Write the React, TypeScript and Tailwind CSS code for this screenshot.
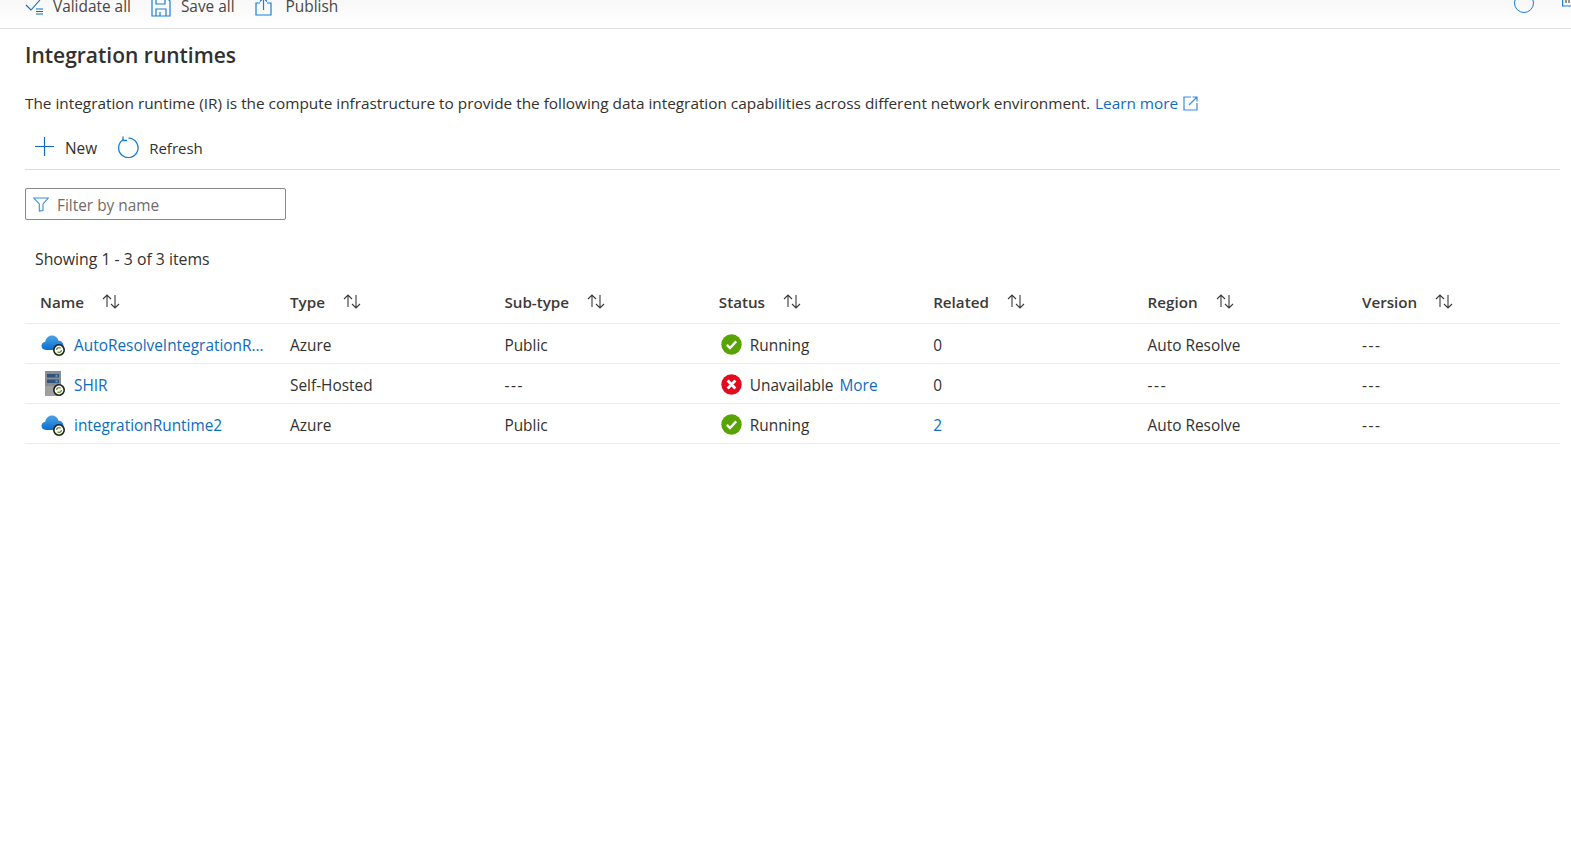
const rows = [
  { icon: "cloud", name: "AutoResolveIntegrationR...", type: "Azure", sub: "Public", ok: true, related: "0", region: "Auto Resolve" },
  { icon: "server", name: "SHIR", type: "Self-Hosted", sub: "---", ok: false, related: "0", region: "---" },
  { icon: "cloud", name: "integrationRuntime2", type: "Azure", sub: "Public", ok: true, related: "2", region: "Auto Resolve" },
];

const columns = ["Name", "Type", "Sub-type", "Status", "Related", "Region", "Version"];

function SortIcon() {
  return (
    <svg width="20" height="16" viewBox="0 0 20 16" fill="none" stroke="#3b3a39" strokeWidth="1.1">
      <path d="M6 14V2M2 6l4-4 4 4" />
      <path d="M14 2v13M10 11l4 4 4-4" />
    </svg>
  );
}

function Dashes({ value }: { value: string }) {
  return value === "---" ? <span className="tracking-[1.6px]">---</span> : <>{value}</>;
}

function Badge() {
  return (
    <svg className="absolute left-[12px] top-[11px]" width="12" height="12" viewBox="0 0 12 12">
      <circle cx="6" cy="6" r="5.2" fill="#fff" stroke="#1c1c1c" strokeWidth="1.6" />
      <path d="M3.6 6a2.4 2.4 0 0 1 4-1.8M8.4 6a2.4 2.4 0 0 1-4 1.8" fill="none" stroke="#5c9a1b" strokeWidth="1.3" />
    </svg>
  );
}

function RuntimeIcon({ kind }: { kind: string }) {
  return (
    <span className="relative mr-[8px] mt-[-2px] inline-block h-[24px] w-[25px] shrink-0">
      {kind === "cloud" ? (
        <svg className="absolute left-0 top-0" width="23" height="18" viewBox="0 0 23 18">
          <defs>
            <linearGradient id="cloudFill" x1="0" y1="0" x2="0" y2="1">
              <stop offset="0" stopColor="#4ba3e3" />
              <stop offset="1" stopColor="#0a6fd0" />
            </linearGradient>
          </defs>
          <path d="M5 17C2 17 .5 15 .5 12.8 .5 10.5 2.2 9 4.3 8.8 4.8 5 7.6 2.5 11 2.5c3.3 0 5.700 2 6.400 5 2.800.2 5 2.300 5 4.900 0 2.600-2 4.600-4.800 4.600z" fill="url(#cloudFill)" />
        </svg>
      ) : (
        <svg className="absolute left-[4px] top-[-2px]" width="16" height="25" viewBox="0 0 16 25">
          <rect width="16" height="25" fill="#a19f9d" />
          <rect width="16" height="15" fill="#8a8d91" />
          <rect x="2" y="3" width="12" height="3.500" fill="#32527c" />
          <rect x="2" y="8.500" width="12" height="3.500" fill="#32527c" />
          <rect x="10.500" y="3.800" width="2" height="2" fill="#4ba3e3" />
          <rect x="10.500" y="9.300" width="2" height="2" fill="#4ba3e3" />
        </svg>
      )}
      <Badge />
    </span>
  );
}

function StatusIcon({ ok }: { ok: boolean }) {
  return (
    <svg className="mr-[8px] mt-[-2px] shrink-0" width="21" height="21" viewBox="0 0 21 21">
      <circle cx="10.500" cy="10.500" r="10.200" fill={ok ? "#57a300" : "#e00b1c"} />
      {ok ? (
        <path d="M5.800 10.800l3.200 3.200 6.200-6.600" fill="none" stroke="#fff" strokeWidth="2.400" />
      ) : (
        <path d="M6.600 6.600l7.800 7.800M14.400 6.600l-7.800 7.800" fill="none" stroke="#fff" strokeWidth="2.800" />
      )}
    </svg>
  );
}

export default function App() {
  return (
    <div className="min-h-[844px] overflow-hidden bg-white font-['Open_Sans','Noto_Sans',sans-serif] text-[15.4px] text-[#323130]">
      {/* toolbar, cut off by the top of the window */}
      <div className="flex h-[29px] items-end justify-between overflow-hidden border-b border-[#e1e1e1] bg-gradient-to-b from-[#f8f8f8] to-white pb-[11px] pl-[25px]">
        <div className="flex h-[20px] items-center text-[#484644]">
          <svg className="mr-[9px]" width="19" height="18" viewBox="0 0 19 18" fill="none" stroke="#0f6cbd" strokeWidth="1.1">
            <path d="M1 7l5 5L15 2" />
            <path d="M11 11h7M11 13.500h7M11 16h7" />
          </svg>
          <span>Validate all</span>
          <svg className="ml-[20px] mr-[10px]" width="20" height="20" viewBox="0 0 20 20" fill="none" stroke="#1a7fd6" strokeWidth="1.2">
            <path d="M1 1h15l3 3v15H1z" />
            <path d="M5 1v6h9V1M5 19v-7h10v7M9 15v4" />
          </svg>
          <span>Save all</span>
          <svg className="ml-[20px] mr-[14px]" width="17" height="20" viewBox="0 0 17 20" fill="none" stroke="#1a7fd6" strokeWidth="1.2">
            <path d="M5 6H1v12h15V6h-4" />
            <path d="M8.500 13V1M5 4.500L8.500 1 12 4.500" />
          </svg>
          <span>Publish</span>
        </div>
        <div className="flex h-[20px] items-center">
          <span className="mr-[28px] mt-[-8px] h-[20px] w-[20px] rounded-full border-[1.5px] border-[#1a7fd6]" />
          <svg className="mt-[-8px]" width="9" height="18" viewBox="0 0 9 18" fill="none" stroke="#1a7fd6" strokeWidth="1.2">
            <path d="M.6 0v12H9" />
            <path d="M4 0v9M7 0v9" stroke="#555" />
          </svg>
        </div>
      </div>

      <div className="pl-[25px] pr-[11px]">
        <h1 className="mt-[9px] h-[34px] text-[21px] font-semibold leading-[34px] text-[#323130]">Integration runtimes</h1>

        <p className="mt-[20px] flex h-[24px] items-center whitespace-nowrap text-[15.35px]">
          The integration runtime (IR) is the compute infrastructure to provide the following data integration capabilities across different network environment.
          <a className="ml-[5px] text-[#0f6cbd]">Learn more</a>
          <svg className="mb-[2px] ml-[5px]" width="15" height="15" viewBox="0 0 15 15" fill="none" stroke="#3b8edb" strokeWidth="1.2">
            <path d="M8 1H1v13h13V7" />
            <path d="M6 9l8-8M9.500 1H14v4.500" />
          </svg>
        </p>

        <div className="mt-[15px] flex h-[35px] items-center pl-[10px]">
          <svg className="mb-[5px] mr-[11px]" width="19" height="19" viewBox="0 0 19 19" fill="none" stroke="#0f6cbd" strokeWidth="1.2">
            <path d="M9.500 0v19M0 9.500h19" />
          </svg>
          <span>New</span>
          <svg className="mb-[4px] ml-[21px] mr-[9px]" width="22" height="22" viewBox="0 0 22 22" fill="none" stroke="#1a7fd6" strokeWidth="1.3">
            <path d="M5.500 3.500a9.700 9.700 0 1 0 5-1.300" />
            <path d="M5 .5v4h4" />
          </svg>
          <span className="text-[15px]">Refresh</span>
        </div>
        <div className="mt-[3px] border-b border-[#dcdcdc]" />

        <div className="mt-[18px] flex h-[32px] w-[261px] items-center rounded-[2px] border border-[#8a8886] pl-[7px]">
          <svg className="mr-[8px]" width="16" height="15" viewBox="0 0 16 15" fill="none" stroke="#3b8edb" strokeWidth="1.1">
            <path d="M.8 1h14.400L10 7v6.500L6.300 14V7z" />
          </svg>
          <span className="pt-[4px] text-[#6e6d6b]">Filter by name</span>
        </div>

        <div className="mt-[27px] h-[24px] pl-[10px] text-[15.8px] leading-[24px]">Showing 1 - 3 of 3 items</div>

        <div className="mt-[12px]">
          <div className="grid h-[41px] grid-cols-[251px_repeat(6,214.4px)_1fr] items-center border-b border-[#edebe9] pb-[2px] text-[15.2px] font-semibold text-[#3b3a39]">
            {columns.map((c, i) => (
              <div key={c} className={i === 0 ? "flex items-center pl-[15px]" : "flex items-center pl-[14px]"}>
                <span>{c}</span>
                <span className="mb-[2px] ml-[17px]">
                  <SortIcon />
                </span>
              </div>
            ))}
          </div>
          {rows.map((r) => (
            <div key={r.name} className="grid h-[40px] grid-cols-[251px_repeat(6,214.4px)_1fr] items-center border-b border-[#edebe9] pt-[5px]">
              <div className="flex items-center pl-[16px]">
                <RuntimeIcon kind={r.icon} />
                <a className="text-[#0f6cbd]">{r.name}</a>
              </div>
              <div className="pl-[14px]">{r.type}</div>
              <div className="pl-[14px]">
                <Dashes value={r.sub} />
              </div>
              <div className="flex items-center pl-[16px]">
                <StatusIcon ok={r.ok} />
                <span>{r.ok ? "Running" : "Unavailable"}</span>
                {!r.ok && <a className="ml-[6px] text-[#0f6cbd]">More</a>}
              </div>
              <div className={r.related === "2" ? "pl-[14px] text-[#0f6cbd]" : "pl-[14px]"}>{r.related}</div>
              <div className="pl-[14px]">
                <Dashes value={r.region} />
              </div>
              <div className="pl-[14px]">
                <Dashes value="---" />
              </div>
            </div>
          ))}
        </div>
      </div>
    </div>
  );
}
